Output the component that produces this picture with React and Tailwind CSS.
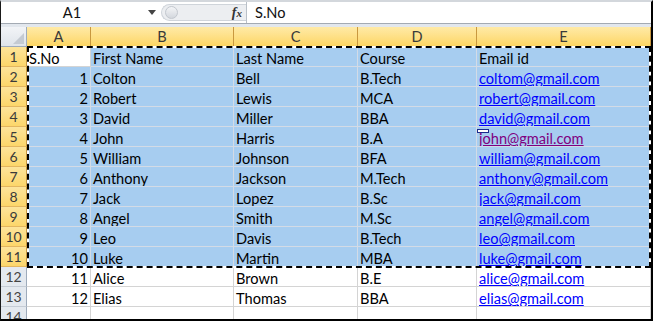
import React from "react";

const rows = [
  [1, "Colton", "Bell", "B.Tech", "coltom@gmail.com"],
  [2, "Robert", "Lewis", "MCA", "robert@gmail.com"],
  [3, "David", "Miller", "BBA", "david@gmail.com"],
  [4, "John", "Harris", "B.A", "john@gmail.com"],
  [5, "William", "Johnson", "BFA", "william@gmail.com"],
  [6, "Anthony", "Jackson", "M.Tech", "anthony@gmail.com"],
  [7, "Jack", "Lopez", "B.Sc", "jack@gmail.com"],
  [8, "Angel", "Smith", "M.Sc", "angel@gmail.com"],
  [9, "Leo", "Davis", "B.Tech", "leo@gmail.com"],
  [10, "Luke", "Martin", "MBA", "luke@gmail.com"],
  [11, "Alice", "Brown", "B.E", "alice@gmail.com"],
  [12, "Elias", "Thomas", "BBA", "elias@gmail.com"],
];

const cols = ["A", "B", "C", "D", "E"];
const grid = "grid grid-cols-[26px_64px_143px_124px_119px_174px]";

function RowHead({ n, on }) {
  return (
    <div
      className={`h-5 flex items-center justify-center border-r border-b text-[14px] ${
        on
          ? "bg-gradient-to-b from-[#fde49a] to-[#fcd66a] border-r-[#c9983f] border-b-[#e3b660] text-[#3a3a3a]"
          : "bg-[#e4e9ef] border-r-[#9eabbb] border-b-[#c5ccd5] text-[#444]"
      }`}
    >
      {n}
    </div>
  );
}

function Cell({ children, sel, right, className = "" }) {
  return (
    <div
      className={`h-5 flex items-end px-[2px] overflow-hidden whitespace-nowrap border-r border-b text-[14.6px] leading-[15px] ${
        sel ? "bg-[#a7cdf0] border-[#d3dbe6]" : "bg-white border-[#d4d4d4]"
      } ${right ? "justify-end" : ""} ${className}`}
    >
      {children}
    </div>
  );
}

function Mail({ text, visited }) {
  return (
    <span className={`underline underline-offset-[1px] ${visited ? "text-[#800080]" : "text-[#0000ff]"}`}>
      {text}
    </span>
  );
}

export default function App() {
  return (
    <div className="w-[653px] h-[321px] overflow-hidden bg-white border-l border-r-2 border-b-2 border-t-2 border-l-[#1a1a1a] border-r-black border-b-black border-t-[#d3d7dc] font-['Lato',sans-serif] text-black relative">
      {/* formula bar */}
      <div className="h-[22px] flex border-b border-[#a3aab3] bg-white">
        <div className="w-[142px] flex items-center justify-center text-[14.6px] text-[#111]">A1</div>
        <div className="w-[18px] flex items-center justify-center">
          <svg width="8" height="5" viewBox="0 0 8 5">
            <path d="M0 0h8L4 5z" fill="#444" />
          </svg>
        </div>
        <div className="w-[85px] my-[2px] flex items-center rounded-l-full bg-[#eceef1] border border-r-0 border-[#cfd4da]">
          <div className="ml-[3px] w-[13px] h-[13px] rounded-full bg-gradient-to-b from-[#f4f5f7] to-[#d3d7dd] border border-[#c2c7ce]" />
          <span className="ml-auto mr-[4px] font-['Liberation_Serif',serif] italic font-bold text-[14px] text-[#333]">
            f<span className="text-[11px]">x</span>
          </span>
        </div>
        <div className="flex-1 flex items-center pl-[8px] border-l border-[#b9c0c8] text-[14.6px] text-[#111]">S.No</div>
      </div>
      <div className="h-[3px] bg-[#e2e7ed]" />

      {/* sheet */}
      <div className="relative">
        <div className={grid}>
          <div className="h-5 border-r border-b border-[#9eabbb] bg-gradient-to-b from-[#f2f4f7] to-[#dfe4ea] relative">
            <svg className="absolute right-[2px] bottom-[2px]" width="11" height="11" viewBox="0 0 11 11">
              <path d="M11 0V11H0z" fill="#c4cad2" />
            </svg>
          </div>
          {cols.map((c) => (
            <div
              key={c}
              className="h-5 flex items-center justify-center border-r border-b border-r-[#c9983f] border-b-[#e0a83c] bg-gradient-to-b from-[#ffeaa6] to-[#fdd663] text-[14.6px] text-[#3a3a3a]"
            >
              {c}
            </div>
          ))}

          <RowHead n={1} on />
          <Cell className="bg-white border-[#d4d4d4]">S.No</Cell>
          <Cell sel>First Name</Cell>
          <Cell sel>Last Name</Cell>
          <Cell sel>Course</Cell>
          <Cell sel>Email id</Cell>

          {rows.map((r, i) => {
            const sel = i < 10;
            return (
              <React.Fragment key={r[0]}>
                <RowHead n={i + 2} on={sel} />
                <Cell sel={sel} right>{r[0]}</Cell>
                <Cell sel={sel}>{r[1]}</Cell>
                <Cell sel={sel}>{r[2]}</Cell>
                <Cell sel={sel}>{r[3]}</Cell>
                <Cell sel={sel}>
                  <Mail text={r[4]} visited={r[1] === "John"} />
                </Cell>
              </React.Fragment>
            );
          })}

          <RowHead n={14} />
          <Cell />
          <Cell />
          <Cell />
          <Cell />
          <Cell />
        </div>

        {/* copy marquee */}
        <div className="absolute left-[26px] top-[19px] w-[624px] h-[222px] border-2 border-white pointer-events-none" />
        <div className="absolute left-[26px] top-[19px] w-[624px] h-[222px] border-2 border-dashed border-black pointer-events-none" />

        {/* mouse cursor */}
        <div className="absolute left-[476px] top-[102px] w-[12px] h-[4px] bg-white border border-[#1b2a8c]" />
      </div>
    </div>
  );
}
